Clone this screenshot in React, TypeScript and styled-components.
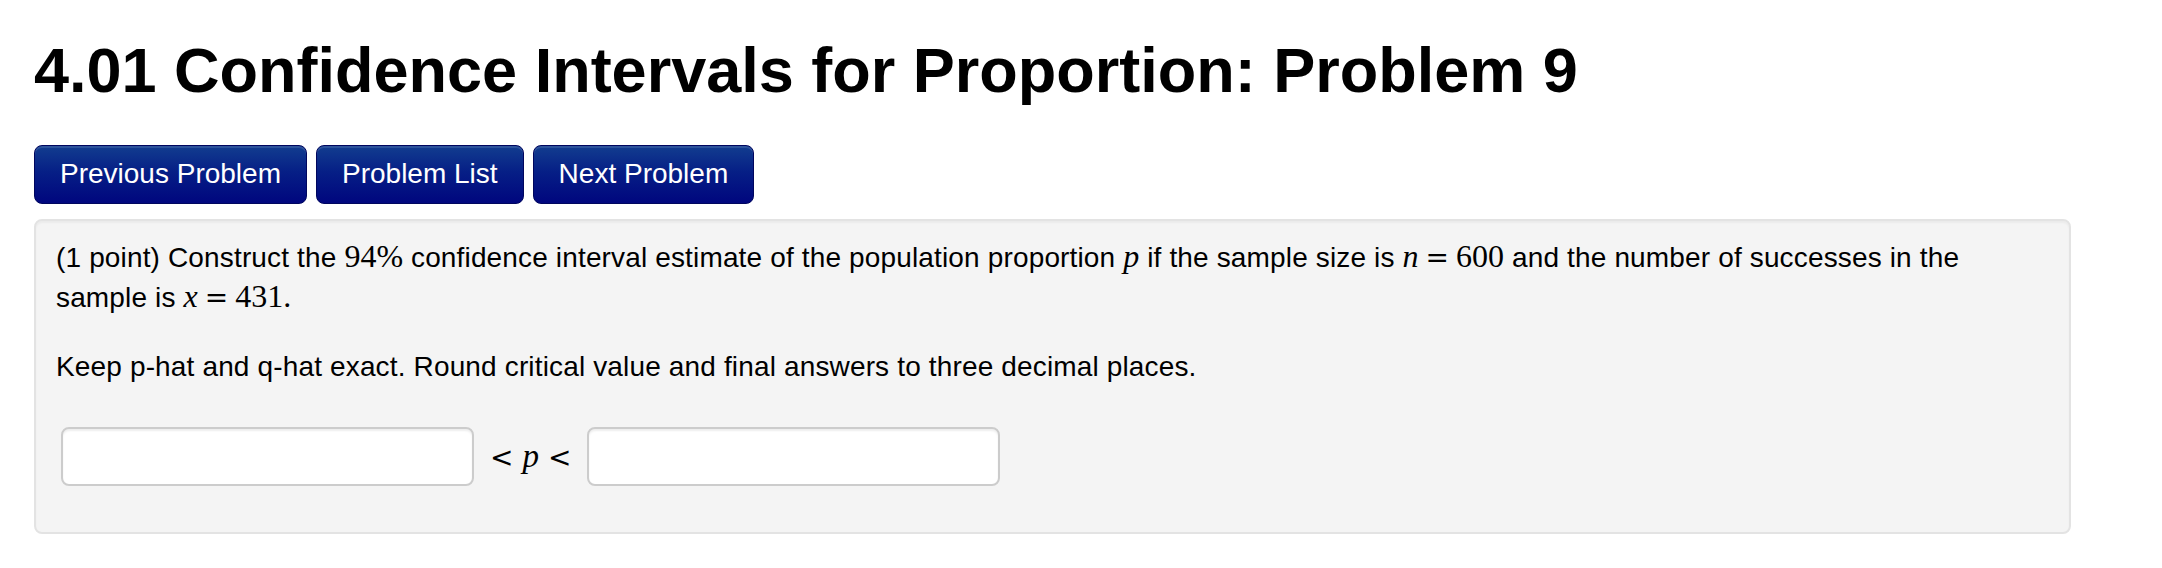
import { createGlobalStyle, styled } from 'styled-components';

const GlobalStyle = createGlobalStyle`
  body {
    margin: 0;
    background: #ffffff;
    font-family: "Liberation Sans", Arial, Helvetica, sans-serif;
    color: #000;
  }
`;

const Page = styled.div`
  padding: 33px 91px 0 34px;
`;

const Title = styled.h1`
  margin: 0 0 36px;
  font-size: 63px;
  line-height: 1.2;
  font-weight: 700;
  color: #000;
`;

const NavRow = styled.div`
  display: flex;
  gap: 9px;
  margin-bottom: 15px;
`;

const NavButton = styled.button`
  height: 59px;
  box-sizing: border-box;
  padding: 0 25px;
  border: 1px solid #00065e;
  border-radius: 8px;
  background: linear-gradient(to bottom, #123d8f 0%, #061f86 45%, #00067e 100%);
  box-shadow: inset 0 2px 0 rgba(255, 255, 255, 0.12);
  color: #fff;
  font-family: "Liberation Sans", Arial, sans-serif;
  font-size: 28px;
  line-height: 40px;
  cursor: pointer;
`;

const Panel = styled.div`
  background: #f4f4f4;
  border: 2px solid #e3e3e3;
  border-radius: 8px;
  box-shadow: inset 0 2px 2px rgba(0, 0, 0, 0.04);
  padding: 17px 20px 46px;
`;

const Para = styled.p<{ $gap?: number }>`
  margin: ${(p) => p.$gap ?? 0}px 0 0;
  font-size: 28px;
  line-height: 40px;
  letter-spacing: 0.15px;
  color: #000;
`;

const MathText = styled.span<{ $italic?: boolean }>`
  font-family: "Liberation Serif", "Times New Roman", serif;
  font-size: 32px;
  line-height: 1;
  letter-spacing: 0;
  font-style: ${(p) => (p.$italic ? 'italic' : 'normal')};
  white-space: nowrap;
`;

const Op = styled.span`
  font-family: "DejaVu Serif", "Liberation Serif", serif;
  font-size: 28px;
  padding: 0 0.25em;
`;

const AnswerRow = styled.div`
  display: flex;
  align-items: center;
  gap: 16px;
  margin: 40px 0 0 5px;
`;

const AnswerInput = styled.input`
  width: 413px;
  height: 59px;
  box-sizing: border-box;
  border: 2px solid #cccccc;
  border-radius: 8px;
  background: #fff;
  box-shadow: inset 0 2px 2px rgba(0, 0, 0, 0.07);
  padding: 0 12px;
  font-size: 28px;
  outline: none;
`;

const Relation = styled.span`
  display: flex;
  align-items: baseline;
  gap: 9px;
  font-family: "DejaVu Sans", "Liberation Sans", sans-serif;
  font-size: 28px;
  color: #000;
  span {
    font-family: "Liberation Serif", serif;
    font-style: italic;
    font-size: 33px;
  }
`;

function App() {
  return (
    <>
      <GlobalStyle />
      <Page>
        <Title>4.01 Confidence Intervals for Proportion: Problem 9</Title>
        <NavRow>
          <NavButton>Previous Problem</NavButton>
          <NavButton>Problem List</NavButton>
          <NavButton>Next Problem</NavButton>
        </NavRow>
        <Panel>
          <Para>
            (1 point) Construct the <MathText>94%</MathText> confidence interval estimate of the
            population proportion <MathText $italic>p</MathText> if the sample size is{' '}
            <MathText>
              <i>n</i>
              <Op>=</Op>600
            </MathText>{' '}
            and the number of successes in the
            <br />
            sample is{' '}
            <MathText>
              <i>x</i>
              <Op>=</Op>431.
            </MathText>
          </Para>
          <Para $gap={29}>
            Keep p-hat and q-hat exact. Round critical value and final answers to three decimal
            places.
          </Para>
          <AnswerRow>
            <AnswerInput />
            <Relation>
              &lt;<span>p</span>&lt;
            </Relation>
            <AnswerInput />
          </AnswerRow>
        </Panel>
      </Page>
    </>
  );
}

export default App;
